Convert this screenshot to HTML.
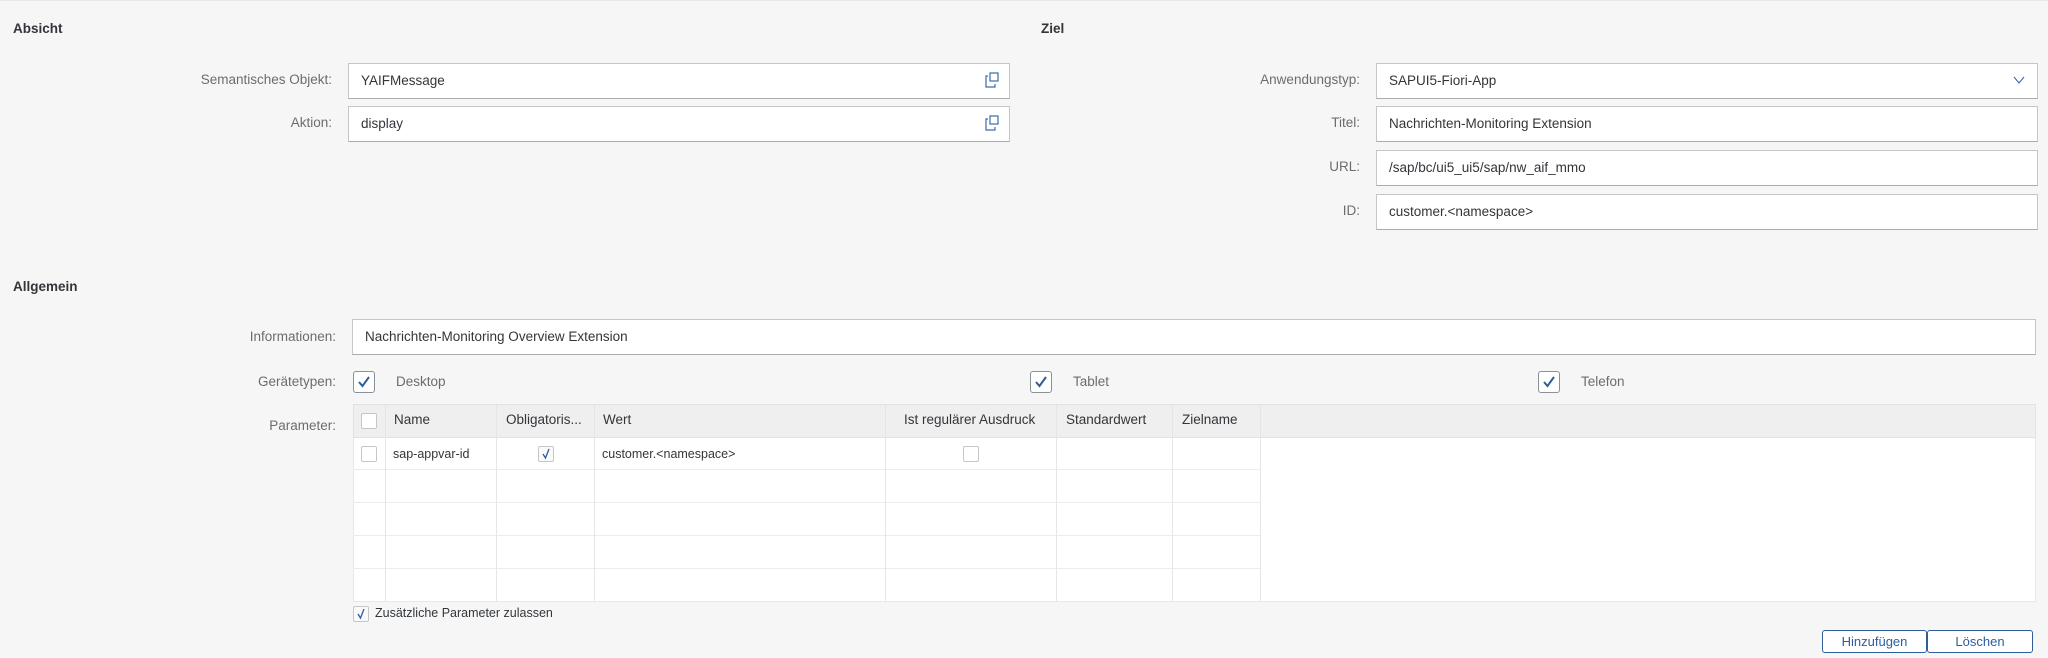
<!DOCTYPE html>
<html><head><meta charset="utf-8"><style>
*{box-sizing:border-box;margin:0;padding:0}
body{width:2048px;height:658px;background:#f6f6f6;font-family:"Liberation Sans",sans-serif;font-size:13.5px;color:#32363a;position:relative;overflow:hidden;border-top:1px solid #e8e8e8}
.a{position:absolute}
.h{font-weight:bold;font-size:13.5px;color:#32363a}
.lbl{position:absolute;text-align:right;color:#6a6d70;font-size:13.5px}
.inp{position:absolute;background:#fff;border:1px solid #c4c6c8;border-bottom-color:#a9acae;height:36px;padding:0 12px;line-height:33px;font-size:13.5px;color:#32363a}
.cb{position:absolute;width:16px;height:16px;border:1px solid #c4c6c8;border-radius:2px;background:#fff}
.cbl{position:absolute;width:22px;height:22px;border:1px solid #89919a;border-radius:3px;background:#fff}
.cb svg,.cbl svg{position:absolute;left:0;top:0}
.th{position:absolute;top:411px;font-size:13.5px;color:#32363a}
.vl{position:absolute;width:1px;background:#e5e5e5}
.hl{position:absolute;height:1px;background:#ececec;left:353px;width:907px}
.btn{position:absolute;top:629px;height:23px;border:1px solid #2f5d9c;border-radius:3px;background:#fff;color:#2f5d9c;text-align:center;line-height:21px;font-size:13px}
</style></head><body>
<div class="a h" style="left:13px;top:20px">Absicht</div>
<div class="a h" style="left:1041px;top:20px">Ziel</div>
<div class="a h" style="left:13px;top:278px">Allgemein</div>

<div class="lbl" style="right:1716px;top:71px">Semantisches Objekt:</div>
<div class="inp" style="left:348px;top:62px;width:662px">YAIFMessage</div>
<div class="lbl" style="right:1716px;top:114px">Aktion:</div>
<div class="inp" style="left:348px;top:105px;width:662px">display</div>
<svg class="a" style="left:984px;top:71px" width="16" height="16" viewBox="0 0 16 16" fill="none" stroke="#3d6aa8" stroke-width="1.2"><rect x="6" y="1" width="8" height="8"/><path d="M4 4H2v11h9v-3"/></svg>
<svg class="a" style="left:984px;top:114px" width="16" height="16" viewBox="0 0 16 16" fill="none" stroke="#3d6aa8" stroke-width="1.2"><rect x="6" y="1" width="8" height="8"/><path d="M4 4H2v11h9v-3"/></svg>

<div class="lbl" style="right:688px;top:71px">Anwendungstyp:</div>
<div class="inp" style="left:1376px;top:62px;width:662px">SAPUI5-Fiori-App</div>
<svg class="a" style="left:2013px;top:74px" width="12" height="10" viewBox="0 0 12 10" fill="none" stroke="#3d6aa8" stroke-width="1.1"><path d="M1 2l5 6 5-6"/></svg>
<div class="lbl" style="right:688px;top:114px">Titel:</div>
<div class="inp" style="left:1376px;top:105px;width:662px">Nachrichten-Monitoring Extension</div>
<div class="lbl" style="right:688px;top:158px">URL:</div>
<div class="inp" style="left:1376px;top:149px;width:662px">/sap/bc/ui5_ui5/sap/nw_aif_mmo</div>
<div class="lbl" style="right:688px;top:202px">ID:</div>
<div class="inp" style="left:1376px;top:193px;width:662px">customer.&lt;namespace&gt;</div>

<div class="lbl" style="right:1712px;top:328px">Informationen:</div>
<div class="inp" style="left:352px;top:318px;width:1684px">Nachrichten-Monitoring Overview Extension</div>

<div class="lbl" style="right:1712px;top:373px">Gerätetypen:</div>
<div class="cbl" style="left:353px;top:370px"><svg width="20" height="20" viewBox="0 0 20 20" fill="none" stroke="#2f5d9c" stroke-width="2"><path d="M5 10l3.5 4L15 5"/></svg></div>
<div class="a" style="left:396px;top:373px;color:#6a6d70">Desktop</div>
<div class="cbl" style="left:1030px;top:370px"><svg width="20" height="20" viewBox="0 0 20 20" fill="none" stroke="#2f5d9c" stroke-width="2"><path d="M5 10l3.5 4L15 5"/></svg></div>
<div class="a" style="left:1073px;top:373px;color:#6a6d70">Tablet</div>
<div class="cbl" style="left:1538px;top:370px"><svg width="20" height="20" viewBox="0 0 20 20" fill="none" stroke="#2f5d9c" stroke-width="2"><path d="M5 10l3.5 4L15 5"/></svg></div>
<div class="a" style="left:1581px;top:373px;color:#6a6d70">Telefon</div>

<div class="lbl" style="right:1712px;top:417px">Parameter:</div>
<div class="a" style="left:353px;top:403px;width:1683px;height:34px;background:#efefef;border:1px solid #e2e2e2"></div>
<div class="a" style="left:353px;top:437px;width:1683px;height:164px;background:#fff;border:1px solid #e8e8e8;border-top:none"></div>
<div class="hl" style="top:468px"></div><div class="hl" style="top:501px"></div><div class="hl" style="top:534px"></div><div class="hl" style="top:567px"></div>
<div class="vl" style="left:385px;top:403px;height:197px"></div>
<div class="vl" style="left:496px;top:403px;height:197px"></div>
<div class="vl" style="left:594px;top:403px;height:197px"></div>
<div class="vl" style="left:885px;top:403px;height:197px"></div>
<div class="vl" style="left:1056px;top:403px;height:197px"></div>
<div class="vl" style="left:1172px;top:403px;height:197px"></div>
<div class="vl" style="left:1260px;top:403px;height:197px"></div>
<div class="cb" style="left:361px;top:412px"></div>
<div class="th" style="left:394px">Name</div>
<div class="th" style="left:506px">Obligatoris...</div>
<div class="th" style="left:603px">Wert</div>
<div class="th" style="left:904px">Ist regulärer Ausdruck</div>
<div class="th" style="left:1066px">Standardwert</div>
<div class="th" style="left:1182px">Zielname</div>
<div class="cb" style="left:361px;top:445px"></div>
<div class="a" style="left:393px;top:446px;font-size:12.5px">sap-appvar-id</div>
<div class="cb" style="left:538px;top:445px;background:#fafafa"><svg width="14" height="14" viewBox="0 0 14 14" fill="none" stroke="#2f5d9c" stroke-width="1.3"><path d="M4 7l2.5 4L10 2"/></svg></div>
<div class="a" style="left:602px;top:446px;font-size:12.5px">customer.&lt;namespace&gt;</div>
<div class="cb" style="left:963px;top:445px"></div>

<div class="cb" style="left:353px;top:605px;background:#fafafa"><svg width="14" height="14" viewBox="0 0 14 14" fill="none" stroke="#2f5d9c" stroke-width="1.3"><path d="M4 7l2.5 4L10 2"/></svg></div>
<div class="a" style="left:375px;top:605px;font-size:12.5px">Zusätzliche Parameter zulassen</div>

<div class="btn" style="left:1822px;width:105px">Hinzufügen</div>
<div class="btn" style="left:1927px;width:106px">Löschen</div>
</body></html>
